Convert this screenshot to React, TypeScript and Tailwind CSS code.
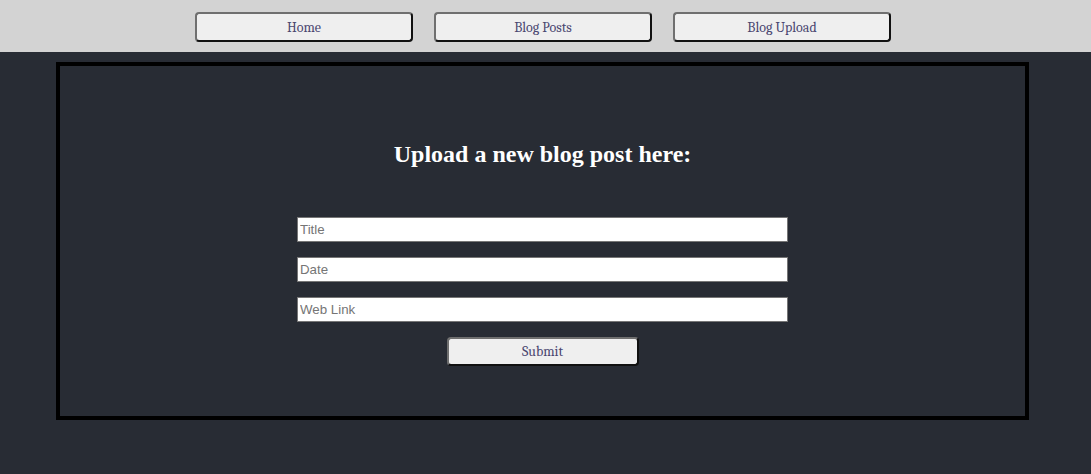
const navItems = ["Home", "Blog Posts", "Blog Upload"];

const fields = ["Title", "Date", "Web Link"];

const serif = "font-['Cambria','Liberation_Serif',serif]";

export default function App() {
    return (
        <div className="min-h-[474px] bg-[#282c34]">
            {/* Nav bar */}
            <nav className="flex gap-[21px] bg-[#d3d3d3] pl-[195px] pt-3 pb-[10px]">
                {navItems.map((item) => (
                    <button
                        key={item}
                        className={`w-[218px] h-[30px] rounded-[4px] border-2 border-[#6f6f6f] border-r-[#111] border-b-[#111] bg-[#efefef] text-[14px] text-[#4a4670] ${serif}`}
                    >
                        {item}
                    </button>
                ))}
            </nav>

            {/* Upload panel */}
            <main className="ml-[56px] mt-[10px] w-[973px] border-4 border-black pt-[74px] pb-[50px]">
                <h2 className="text-center text-[24px] font-bold leading-[28px] text-white font-['Liberation_Serif',serif]">
                    Upload a new blog post here:
                </h2>

                <form className="mt-[49px] flex flex-col items-center gap-[15px]" onSubmit={(e) => e.preventDefault()}>
                    {fields.map((f) => (
                        <input
                            key={f}
                            placeholder={f}
                            className="w-[491px] h-[25px] border border-[#767676] bg-white px-[2px] text-[13.3px] text-black placeholder:text-[#757575] font-['Liberation_Sans',sans-serif] outline-none"
                        />
                    ))}
                    <button
                        type="submit"
                        className={`w-[192px] h-[29px] rounded-[4px] border-2 border-[#6f6f6f] border-r-[#111] border-b-[#111] bg-[#efefef] text-[14px] text-[#4a4670] ${serif}`}
                    >
                        Submit
                    </button>
                </form>
            </main>
        </div>
    );
}
